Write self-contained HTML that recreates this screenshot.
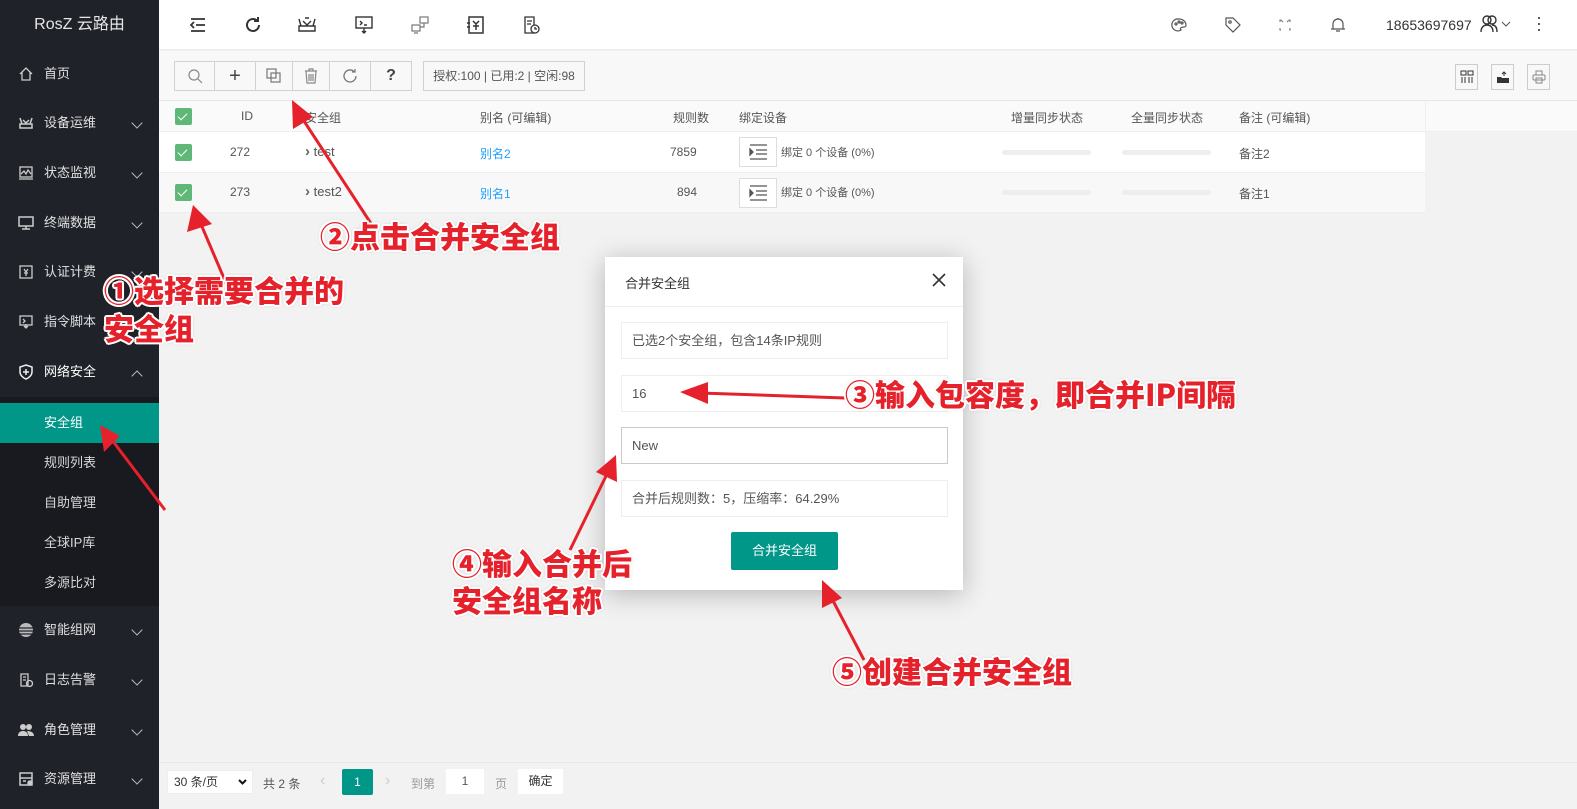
<!DOCTYPE html>
<html><head><meta charset="utf-8">
<style>
*{margin:0;padding:0;box-sizing:border-box}
body{width:1577px;height:809px;overflow:hidden;background:#f2f2f2;font-family:"Liberation Sans","Noto Sans CJK SC",sans-serif;font-size:12px;color:#555;position:relative}
.abs{position:absolute}
#side{left:0;top:0;width:159px;height:809px;background:#20222a;color:#ddd}
.logo{position:absolute;left:0;top:0;width:159px;height:50px;line-height:50px;text-align:center;font-size:16px;color:#e6e6e6}
.mi{position:absolute;left:0;width:159px;height:40px;line-height:40px;font-size:13px;color:#e0e0e0;padding-left:44px}
.mi .ic{position:absolute;left:18px;top:12px;width:16px;height:16px}
.mi .ar{position:absolute;left:133px;top:16px;width:8px;height:8px;border-right:1.5px solid #bbb;border-bottom:1.5px solid #bbb;transform:rotate(45deg)}
.mi .up{top:20px;transform:rotate(-135deg)}
#sub{left:0;top:397px;width:159px;height:209px;background:#191a1f}
.si{position:absolute;left:0;width:159px;height:40px;line-height:40px;padding-left:44px;font-size:13px;color:#d8d8d8}
#top{left:159px;top:0;width:1418px;height:50px;background:#fff;border-bottom:1px solid #ececec}
.ti{position:absolute;top:15px;width:20px;height:20px}
#tb{left:159px;top:51px;width:1418px;height:50px;background:#f8f8f8;border-bottom:1px solid #e6e6e6}
.btg{position:absolute;left:15px;top:10px;height:30px;border:1px solid #d2d2d2;background:#f8f8f8;display:flex}
.btg div{width:36px;height:28px;border-right:1px solid #d2d2d2;display:flex;align-items:center;justify-content:center;color:#555}
.btg div:last-child{border-right:none}
.rb{position:absolute;top:13px;width:23px;height:26px;border:1px solid #ccc;display:flex;align-items:center;justify-content:center}
#tbl{left:159px;top:101px;width:1266px;height:112px;background:#fff}
.hd{position:absolute;left:0;top:0;width:1418px;height:31px;background:#fafafa;border-bottom:1px solid #eee}
.c{position:absolute;font-size:12px;color:#555}
.ck{position:absolute;left:16px;width:17px;height:17px;background:#5fb878;border-radius:2px}
.ck:after{content:"";position:absolute;left:5px;top:3px;width:4px;height:8px;border-right:1.5px solid #fff;border-bottom:1.5px solid #fff;transform:rotate(45deg)}
.bar{position:absolute;width:89px;height:5px;background:#eee;border-radius:3px}
.dbtn{position:absolute;left:580px;width:38px;height:30px;border:1px solid #ddd;background:#fff}
#mask{left:605px;top:257px;width:358px;height:333px;background:#fff;box-shadow:0 4px 25px rgba(0,0,0,.25)}
.fd{position:absolute;left:16px;width:327px;height:37px;border:1px solid #eee;padding-left:10px;line-height:35px;font-size:13px;color:#555}
#foot{left:159px;top:762px;width:1418px;height:47px;background:#f2f2f2;border-top:1px solid #e8e8e8}
.ann{position:absolute;font-weight:900;font-size:30px;color:#e5222b;font-family:"Noto Sans CJK SC","WenQuanYi Zen Hei",sans-serif;text-shadow:2px 0 0 #fff,-2px 0 0 #fff,0 2px 0 #fff,0 -2px 0 #fff,1.5px 1.5px 0 #fff,-1.5px -1.5px 0 #fff,1.5px -1.5px 0 #fff,-1.5px 1.5px 0 #fff,0 0 4px rgba(0,0,0,.3);line-height:38px;white-space:nowrap}
</style></head><body>

<div id="side" class="abs">
 <div class="logo">RosZ 云路由</div>
 <div class="mi" style="top:54px"><svg class="ic" viewBox="0 0 16 16" fill="none" stroke="#ccc" stroke-width="1.3"><path d="M2 8L8 2l6 6M4 6.5V14h8V6.5"/></svg>首页</div>
 <div class="mi" style="top:103px"><svg class="ic" viewBox="0 0 16 16" fill="none" stroke="#ccc" stroke-width="1.5"><path d="M2 9h12v4H2zM4 9L2 3M12 9l2-6M5 5l3 3 3-3"/></svg>设备运维<i class="ar"></i></div>
 <div class="mi" style="top:153px"><svg class="ic" viewBox="0 0 16 16" fill="none" stroke="#ccc" stroke-width="1.3"><rect x="2" y="2" width="12" height="10"/><path d="M3 9l3-3 2 3 2-4 3 4M1 14h14"/></svg>状态监视<i class="ar"></i></div>
 <div class="mi" style="top:203px"><svg class="ic" viewBox="0 0 16 16" fill="none" stroke="#ccc" stroke-width="1.5"><rect x="1" y="2" width="14" height="9"/><path d="M8 11v3M4 14h8"/></svg>终端数据<i class="ar"></i></div>
 <div class="mi" style="top:252px"><svg class="ic" viewBox="0 0 16 16" fill="none" stroke="#ccc" stroke-width="1.3"><rect x="2" y="2" width="12" height="12"/><path d="M6 5l2 3 2-3M8 8v4M6 9h4"/></svg>认证计费<i class="ar"></i></div>
 <div class="mi" style="top:302px"><svg class="ic" viewBox="0 0 16 16" fill="none" stroke="#ccc" stroke-width="1.3"><rect x="2" y="2" width="12" height="9"/><path d="M5 5l2 2-2 2M8 14l0-4M6 12l2 2 2-2"/></svg>指令脚本<i class="ar"></i></div>
 <div class="mi" style="top:352px;color:#fff"><svg class="ic" viewBox="0 0 16 16" fill="none" stroke="#eee" stroke-width="1.5"><path d="M8 1l6 2v5c0 3-3 6-6 7-3-1-6-4-6-7V3z M8 5v6M5 8h6"/></svg>网络安全<i class="ar up"></i></div>
 <div id="sub" class="abs">
  <div class="si" style="top:6px;background:#009688;color:#fff">安全组</div>
  <div class="si" style="top:46px">规则列表</div>
  <div class="si" style="top:86px">自助管理</div>
  <div class="si" style="top:126px">全球IP库</div>
  <div class="si" style="top:166px">多源比对</div>
 </div>
 <div class="mi" style="top:610px"><svg class="ic" viewBox="0 0 16 16"><circle cx="8" cy="8" r="7" fill="#bbb"/><path d="M1 6h14M1 9h14M2 12h12" stroke="#20222a" stroke-width="1.3"/></svg>智能组网<i class="ar"></i></div>
 <div class="mi" style="top:660px"><svg class="ic" viewBox="0 0 16 16" fill="none" stroke="#ccc" stroke-width="1.3"><path d="M3 2h7v12H3zM5 5h3M5 8h3"/><circle cx="11.5" cy="11.5" r="3"/></svg>日志告警<i class="ar"></i></div>
 <div class="mi" style="top:710px"><svg class="ic" viewBox="0 0 16 16" fill="#ccc"><circle cx="5" cy="5" r="3"/><circle cx="11" cy="5" r="3"/><path d="M0 14c0-4 3-5 5-5s5 1 5 5zM9 9c3 0 7 1 7 5h-5z"/></svg>角色管理<i class="ar"></i></div>
 <div class="mi" style="top:759px"><svg class="ic" viewBox="0 0 16 16" fill="none" stroke="#ccc" stroke-width="1.5"><rect x="2" y="2" width="12" height="12"/><path d="M2 7h12M5 10h3"/><circle cx="12" cy="12" r="2" fill="#ccc"/></svg>资源管理<i class="ar"></i></div>
</div>

<div id="top" class="abs">
 <svg class="ti" style="left:29px" viewBox="0 0 20 20" fill="none" stroke="#333" stroke-width="1.8"><path d="M3 4h14M8 10h9M3 16h14M6 7l-3 3 3 3"/></svg>
 <svg class="ti" style="left:84px" viewBox="0 0 20 20" fill="none" stroke="#333" stroke-width="2"><path d="M16 10a6 6 0 1 1-2-4.5M15 2v4h-4"/></svg>
 <svg class="ti" style="left:138px" viewBox="0 0 20 20" fill="none" stroke="#333" stroke-width="1.4"><path d="M2 11h16v5H2zM4 11L2 4M16 11l2-7M6 6l4 4 4-4M8 3h4"/></svg>
 <svg class="ti" style="left:195px" viewBox="0 0 20 20" fill="none" stroke="#333" stroke-width="1.4"><rect x="2" y="2" width="16" height="11"/><path d="M6 6l2 2-2 2M10 10h3M10 13v5M8 16l2 2 2-2"/></svg>
 <svg class="ti" style="left:251px" viewBox="0 0 20 20" fill="none" stroke="#777" stroke-width="1.2"><rect x="10" y="2" width="8" height="6"/><rect x="2" y="10" width="8" height="6"/><path d="M14 8v4h-4M4 18h4"/></svg>
 <svg class="ti" style="left:307px" viewBox="0 0 20 20" fill="none" stroke="#333" stroke-width="1.5"><rect x="3" y="2" width="14" height="16"/><path d="M7 6l3 3 3-3M10 9v6M7 11h6M1 8h3M1 12h3"/></svg>
 <svg class="ti" style="left:362px" viewBox="0 0 20 20" fill="none" stroke="#333" stroke-width="1.3"><path d="M4 2h9v16H4zM6 6h5M6 9h4"/><circle cx="14" cy="14" r="4" fill="#fff"/><path d="M14 12v2h2"/></svg>
 <svg class="ti" style="left:1010px" viewBox="0 0 20 20" fill="none" stroke="#555" stroke-width="1.2"><path d="M10 4a6 6 0 1 0 2 11c-2-2 1-3 3-3s2-1 2-3a7 7 0 0 0-7-5z"/><circle cx="7" cy="9" r="1"/><circle cx="10" cy="7" r="1"/><circle cx="13" cy="8" r="1"/></svg>
 <svg class="ti" style="left:1064px" viewBox="0 0 20 20" fill="none" stroke="#555" stroke-width="1.2"><path d="M3 3h7l7 7-7 7-7-7z"/><circle cx="7" cy="7" r="1.2"/></svg>
 <svg class="ti" style="left:1116px" viewBox="0 0 20 20" fill="none" stroke="#777" stroke-width="1.1"><path d="M6 5H5v2M14 5h1v2M5 13v2h1M15 13v2h-1M6 5l2 2M14 5l-2 2"/></svg>
 <svg class="ti" style="left:1169px" viewBox="0 0 20 20" fill="none" stroke="#555" stroke-width="1.2"><path d="M5 14V9a5 5 0 0 1 10 0v5zM3 14h14M8 16h4M10 3v1"/></svg>
 <div class="abs" style="left:1227px;top:17px;font-size:14px;color:#333">18653697697</div>
 <svg class="abs" style="left:1320px;top:14px" width="20" height="20" viewBox="0 0 20 20" fill="none" stroke="#333" stroke-width="1.4"><circle cx="8" cy="6" r="4"/><circle cx="13" cy="6" r="4"/><path d="M2 18c0-5 3-7 6-7s6 2 6 7M13 11c3 0 5 2 5 7"/></svg>
 <svg class="abs" style="left:1342px;top:20px" width="10" height="8" viewBox="0 0 10 8" fill="none" stroke="#555"><path d="M1 2l4 4 4-4"/></svg>
 <div class="abs" style="left:1379px;top:15px;width:2px;height:20px;background:radial-gradient(circle,#555 1px,transparent 1.3px) 0 0/2px 6px"></div>
</div>

<div id="tb" class="abs">
 <div class="btg">
  <div style="width:40px"><svg width="16" height="16" viewBox="0 0 16 16" fill="none" stroke="#888" stroke-width="1.2"><circle cx="7" cy="7" r="5"/><path d="M11 11l4 4"/></svg></div>
  <div style="width:41px;font-size:20px;color:#444">+</div>
  <div style="width:37px"><svg width="16" height="16" viewBox="0 0 16 16" fill="none" stroke="#777" stroke-width="1.2"><rect x="1" y="1" width="9" height="9"/><rect x="5" y="5" width="9" height="9"/></svg></div>
  <div style="width:37px"><svg width="16" height="16" viewBox="0 0 16 16" fill="none" stroke="#888" stroke-width="1.2"><path d="M2 3h12M6 3V1h4v2M3 3l1 12h8l1-12M6 6v7M8 6v7M10 6v7"/></svg></div>
  <div style="width:41px"><svg width="16" height="16" viewBox="0 0 16 16" fill="none" stroke="#777" stroke-width="1.3"><path d="M14 8a6 6 0 1 1-2-4.5M13 1v3h-3"/></svg></div>
  <div style="width:40px;font-weight:bold;font-size:16px;color:#444">?</div>
 </div>
 <div class="abs" style="left:264px;top:10px;width:162px;height:30px;border:1px solid #d2d2d2;line-height:28px;text-align:center;font-size:12px;color:#555">授权:100 | 已用:2 | 空闲:98</div>
 <div class="rb" style="left:1296px"><svg width="14" height="14" viewBox="0 0 14 14" fill="none" stroke="#333"><rect x="1" y="1" width="5" height="4"/><rect x="8" y="1" width="5" height="4"/><path d="M2 7v6M5 7v6M9 7v6M12 7v6"/></svg></div>
 <div class="rb" style="left:1332px"><svg width="14" height="14" viewBox="0 0 14 14"><path d="M1 7h4l1 1h7v5H1z" fill="#333"/><path d="M8 6V2M6 4l2-2 2 2" stroke="#333" fill="none"/></svg></div>
 <div class="rb" style="left:1368px"><svg width="14" height="14" viewBox="0 0 14 14" fill="none" stroke="#888"><rect x="4" y="1" width="6" height="4"/><rect x="1" y="5" width="12" height="5" rx="1"/><rect x="4" y="8" width="6" height="5"/></svg></div>
</div>

<div id="tbl" class="abs">
 <div class="hd">
  <div class="ck" style="top:7px"></div>
  <div class="c" style="left:82px;top:8px">ID</div>
  <div class="c" style="left:146px;top:8px">安全组</div>
  <div class="c" style="left:321px;top:8px">别名 (可编辑)</div>
  <div class="c" style="left:514px;top:8px">规则数</div>
  <div class="c" style="left:580px;top:8px">绑定设备</div>
  <div class="c" style="left:852px;top:8px">增量同步状态</div>
  <div class="c" style="left:972px;top:8px">全量同步状态</div>
  <div class="c" style="left:1080px;top:8px">备注 (可编辑)</div>
 </div>
 <div class="abs" style="left:1266px;top:0;width:1px;height:31px;background:#eee"></div>
 <div class="abs" style="left:0;top:31px;width:1266px;height:41px;background:#fff;border-bottom:1px solid #eee">
  <div class="ck" style="top:12px"></div>
  <div class="c" style="left:71px;top:13px">272</div>
  <div class="c" style="left:146px;top:11px;font-size:13px"><b style="font-size:15px;color:#666">›</b> test</div>
  <div class="c" style="left:321px;top:13px;color:#1e9fff">别名2</div>
  <div class="c" style="left:511px;top:13px">7859</div>
  <div class="dbtn" style="top:5px"><svg width="36" height="28" viewBox="0 0 36 28" fill="none" stroke="#555" stroke-width="1.3"><path d="M10 7h17M16 12h11M16 16h11M10 21h17"/><path d="M10 11l3 3-3 3z" fill="#555"/></svg></div>
  <div class="c" style="left:622px;top:12px;font-size:11px">绑定 0 个设备 (0%)</div>
  <div class="bar" style="left:843px;top:18px"></div><div class="bar" style="left:963px;top:18px"></div>
  <div class="c" style="left:1080px;top:13px">备注2</div>
 </div>
 <div class="abs" style="left:0;top:72px;width:1266px;height:40px;background:#f8f8f8;border-bottom:1px solid #eee">
  <div class="ck" style="top:11px"></div>
  <div class="c" style="left:71px;top:12px">273</div>
  <div class="c" style="left:146px;top:10px;font-size:13px"><b style="font-size:15px;color:#666">›</b> test2</div>
  <div class="c" style="left:321px;top:12px;color:#1e9fff">别名1</div>
  <div class="c" style="left:518px;top:12px">894</div>
  <div class="dbtn" style="top:5px"><svg width="36" height="28" viewBox="0 0 36 28" fill="none" stroke="#555" stroke-width="1.3"><path d="M10 7h17M16 12h11M16 16h11M10 21h17"/><path d="M10 11l3 3-3 3z" fill="#555"/></svg></div>
  <div class="c" style="left:622px;top:11px;font-size:11px">绑定 0 个设备 (0%)</div>
  <div class="bar" style="left:843px;top:17px"></div><div class="bar" style="left:963px;top:17px"></div>
  <div class="c" style="left:1080px;top:12px">备注1</div>
 </div>
</div>

<div id="mask" class="abs">
 <div class="abs" style="left:20px;top:16px;font-size:13px;color:#333">合并安全组</div>
 <svg class="abs" style="left:327px;top:16px" width="14" height="14" viewBox="0 0 14 14" stroke="#333" stroke-width="1.6"><path d="M1 1l12 12M13 1L1 13"/></svg>
 <div class="abs" style="left:0;top:49px;width:358px;height:1px;background:#eee"></div>
 <div class="fd" style="top:65px">已选2个安全组，包含14条IP规则</div>
 <div class="fd" style="top:118px">16</div>
 <div class="fd" style="top:170px;border-color:#c9c9c9">New</div>
 <div class="fd" style="top:223px">合并后规则数：5，压缩率：64.29%</div>
 <div class="abs" style="left:126px;top:275px;width:107px;height:38px;background:#009688;border-radius:2px;color:#fff;font-size:13px;text-align:center;line-height:38px">合并安全组</div>
</div>

<div id="foot" class="abs">
 <div class="abs" style="left:8px;top:7px;width:86px;height:24px;background:#fff;border:1px solid #eee;font-size:12px;color:#333;line-height:22px;padding-left:6px">30 条/页<svg class="abs" style="left:70px;top:8px" width="9" height="6" viewBox="0 0 9 6" fill="none" stroke="#111" stroke-width="2"><path d="M1 1l3.5 3.5L8 1"/></svg></div>
 <div class="abs" style="left:104px;top:12px;color:#555">共 2 条</div>
 <div class="abs" style="left:161px;top:9px;color:#ccc;font-size:16px">‹</div>
 <div class="abs" style="left:183px;top:6px;width:31px;height:26px;background:#009688;color:#fff;text-align:center;line-height:26px;border-radius:2px">1</div>
 <div class="abs" style="left:226px;top:9px;color:#ccc;font-size:16px">›</div>
 <div class="abs" style="left:252px;top:12px;color:#999">到第</div>
 <div class="abs" style="left:287px;top:6px;width:38px;height:25px;background:#fff;text-align:center;line-height:25px;color:#555">1</div>
 <div class="abs" style="left:336px;top:12px;color:#999">页</div>
 <div class="abs" style="left:359px;top:6px;width:45px;height:25px;background:#fff;text-align:center;line-height:25px;color:#333">确定</div>
</div>

<svg class="abs" style="left:0;top:0" width="1577" height="809">
 <g fill="#e5222b" stroke="#e5222b">
  <line x1="226" y1="283" x2="200" y2="222" stroke-width="3"/><polygon points="193,205 187,232 212,224" stroke="none"/>
  <line x1="165" y1="510" x2="112" y2="440" stroke-width="3"/><polygon points="100,425 104,452 120,436" stroke="none"/>
  <line x1="372" y1="225" x2="302" y2="118" stroke-width="3"/><polygon points="292,100 293,129 313,117" stroke="none"/>
  <line x1="845" y1="398" x2="700" y2="393" stroke-width="3"/><polygon points="680,392 708,382 708,404" stroke="none"/>
  <line x1="570" y1="550" x2="608" y2="472" stroke-width="3"/><polygon points="616,455 596,472 617,482" stroke="none"/>
  <line x1="864" y1="660" x2="830" y2="595" stroke-width="3"/><polygon points="822,580 822,608 842,598" stroke="none"/>
 </g>
</svg>
<div class="ann" style="left:104px;top:270px">①选择需要合并的</div>
<div class="ann" style="left:104px;top:308px">安全组</div>
<div class="ann" style="left:320px;top:216px">②点击合并安全组</div>
<div class="ann" style="left:845px;top:374px">③输入包容度，即合并IP间隔</div>
<div class="ann" style="left:452px;top:543px">④输入合并后</div>
<div class="ann" style="left:452px;top:580px">安全组名称</div>
<div class="ann" style="left:832px;top:651px">⑤创建合并安全组</div>
</body></html>
